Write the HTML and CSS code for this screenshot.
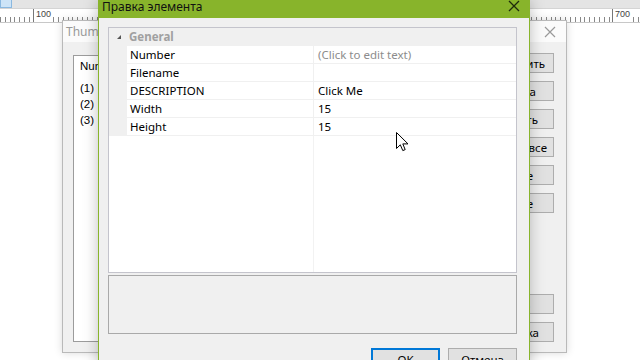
FILE: index.html
```html
<!DOCTYPE html>
<html lang="ru">
<head>
    <meta charset="UTF-8">
    <title>Правка элемента</title>
    <link rel="stylesheet" href="styles.css">
</head>
<body>
<div class="desktop">
    <div class="topbar"><span class="topbar-btn"></span></div>
    <div class="ruler">
        <span class="ruler-mark mark-100">100</span>
        <span class="ruler-mark mark-700">700</span>
    </div>

    <!-- окно на заднем плане -->
    <div class="back-window">
        <div class="bw-title">
            <span>Thumbnail</span>
            <svg class="bw-close" width="12" height="12" viewBox="0 0 12 12"><path d="M1 1L11 11M11 1L1 11" stroke="#9a9a9a" stroke-width="1.2"/></svg>
        </div>
        <div class="bw-body">
            <div class="listbox">
                <div class="lb-head">Number</div>
                <div class="lb-item">(1)</div>
                <div class="lb-item">(2)</div>
                <div class="lb-item">(3)</div>
            </div>
            <div class="bw-buttons">
                <button class="btn pad-8">Добавить</button>
                <button class="btn pad-17">Адреса</button>
                <button class="btn pad-15">Удалить</button>
                <button class="btn pad-6">Удалить все</button>
                <button class="btn pad-20">Выше</button>
                <button class="btn pad-20">Ниже</button>
                <button class="btn btn-low pad-30">Сохранить</button>
                <button class="btn pad-14">Справка</button>
            </div>
        </div>
    </div>

    <!-- активный диалог -->
    <div class="dialog">
        <div class="dlg-title">
            <span>Правка элемента</span>
            <svg class="dlg-close" width="12" height="12" viewBox="0 0 12 12"><path d="M1 1L11 11M11 1L1 11" stroke="#1e2a0c" stroke-width="1.3"/></svg>
        </div>
        <div class="dlg-body">
            <div class="propgrid">
                <div class="pg-category">
                    <span class="pg-arrow"></span>
                    <span class="pg-cat-name">General</span>
                </div>
                <div class="pg-row">
                    <span class="pg-margin"></span>
                    <span class="pg-name">Number</span>
                    <span class="pg-value muted">(Click to edit text)</span>
                </div>
                <div class="pg-row">
                    <span class="pg-margin"></span>
                    <span class="pg-name">Filename</span>
                    <span class="pg-value"></span>
                </div>
                <div class="pg-row">
                    <span class="pg-margin"></span>
                    <span class="pg-name">DESCRIPTION</span>
                    <span class="pg-value">Click Me</span>
                </div>
                <div class="pg-row">
                    <span class="pg-margin"></span>
                    <span class="pg-name">Width</span>
                    <span class="pg-value">15</span>
                </div>
                <div class="pg-row">
                    <span class="pg-margin"></span>
                    <span class="pg-name">Height</span>
                    <span class="pg-value">15</span>
                </div>
                <div class="pg-empty">
                    <span></span>
                    <span class="pg-empty-value"></span>
                </div>
            </div>
            <div class="pg-desc"></div>
            <div class="dlg-buttons">
                <button class="btn btn-default">OK</button>
                <button class="btn">Отмена</button>
            </div>
        </div>
    </div>

    <svg class="cursor" width="13" height="20" viewBox="0 0 13 20">
        <path d="M0.5 0.5V16.5L4.3 12.8L6.8 18.6L9.2 17.6L6.8 11.9H12L0.5 0.5Z" fill="#fff" stroke="#000" stroke-width="1"/>
    </svg>
</div>
</body>
</html>
```

FILE: styles.css
```css
body {
    margin: 0;
    font-family: "Noto Sans", "DejaVu Sans", sans-serif;
    font-size: 11.5px;
    color: #000;
}

.desktop {
    position: relative;
    width: 640px;
    height: 360px;
    overflow: hidden;
    background: #fff;
}

.topbar {
    height: 8px;
    background: #e4e4e4;
    border-bottom: 1px solid #d4d4d4;
}

.topbar-btn {
    display: block;
    width: 10px;
    height: 7px;
    background: #cde4f7;
    border: 1px solid #8ab8e0;
    border-top: none;
}

.ruler {
    position: relative;
    height: 13px;
    background:
        repeating-linear-gradient(to right, #888 0 1px, transparent 1px 4.83px) 0 8px / 100% 5px no-repeat,
        #fff;
    border-bottom: 1px solid #c8c8c8;
}

.ruler-mark {
    position: absolute;
    top: 0;
    padding-left: 2px;
    border-left: 1px solid #777;
    height: 13px;
    font-family: "Liberation Sans", sans-serif;
    font-size: 9px;
    line-height: 10px;
    color: #444;
    background: #fff;
}

.mark-100 { left: 33px; }
.mark-700 { left: 612px; }

/* фоновое окно */
.back-window {
    position: absolute;
    left: 62px;
    top: 20px;
    width: 503px;
    height: 331px;
    border: 1px solid #b9b9b9;
    background: #f0f0f0;
    display: flex;
    flex-direction: column;
    box-shadow: 0 0 8px rgba(0,0,0,0.15);
}

.bw-title {
    height: 21px;
    background: #fbfbfb;
    display: flex;
    align-items: center;
    justify-content: space-between;
    padding: 0 10px 0 3px;
    font-size: 12px;
    color: #999;
}

.bw-body {
    flex: 1;
    display: flex;
    padding: 11px 12px 10px 10px;
    gap: 10px;
}

.listbox {
    flex: 1;
    background: #fff;
    border: 1px solid #9c9c9c;
    margin-top: 2px;
    padding: 4px 6px;
    font-family: "Liberation Sans", sans-serif;
    font-size: 11.5px;
}

.lb-head {
    height: 16px;
    margin-bottom: 6px;
}

.lb-item {
    height: 16px;
}

.bw-buttons {
    width: 84px;
    display: flex;
    flex-direction: column;
    gap: 8px;
}

.btn {
    height: 20px;
    border: 1px solid #adadad;
    background: #e1e1e1;
    font-family: "Noto Sans", sans-serif;
    font-size: 11.5px;
    color: #000;
    padding: 0;
    white-space: nowrap;
    overflow: hidden;
}

.bw-buttons .btn {
    text-align: right;
}

.pad-6 { padding-right: 6px; }
.pad-8 { padding-right: 8px; }
.pad-14 { padding-right: 14px; }
.pad-15 { padding-right: 15px; }
.pad-17 { padding-right: 17px; }
.pad-20 { padding-right: 20px; }
.pad-30 { padding-right: 30px; }

.btn-low {
    margin-top: auto;
}

/* диалог */
.dialog {
    position: absolute;
    left: 98px;
    top: 0;
    width: 430px;
    height: 380px;
    border: 1px solid #88b42b;
    border-top: none;
    background: #f0f0f0;
    box-shadow: 0 0 14px rgba(0,0,0,0.25);
}

.dlg-title {
    height: 18px;
    background: #88b42b;
    display: flex;
    justify-content: space-between;
    padding: 0 9px 0 3px;
    font-size: 12px;
    line-height: 14px;
    color: #111;
}

.dlg-body {
    padding: 9px 12px 0 9px;
}

.propgrid {
    height: 244px;
    border: 1px solid #c4c4cc;
    background: #fff;
    display: flex;
    flex-direction: column;
}

.pg-category {
    height: 17px;
    background: #f0f0f0;
    border-bottom: 1px solid #f0f0f0;
    display: flex;
    align-items: center;
    font-weight: bold;
    color: #a0a0a0;
}

.pg-arrow {
    width: 0;
    height: 0;
    margin: 0 7px 0 8px;
    border-left: 4px solid transparent;
    border-bottom: 4px solid #555;
}

.pg-cat-name {
    padding-left: 1px;
}

.pg-row {
    display: grid;
    grid-template-columns: 18px 186px 1fr;
    height: 18px;
    line-height: 17px;
}

.pg-margin {
    background: #f0f0f0;
}

.pg-name {
    padding-left: 3px;
    border-bottom: 1px solid #f0f0f0;
}

.pg-value {
    padding-left: 4px;
    border-left: 1px solid #f0f0f0;
    border-bottom: 1px solid #f0f0f0;
}

.muted {
    color: #8c8c8c;
}

.pg-empty {
    flex: 1;
    display: grid;
    grid-template-columns: 204px 1fr;
}

.pg-empty-value {
    border-left: 1px solid #f2f2f2;
}

.pg-desc {
    height: 57px;
    margin-top: 2px;
    border: 1px solid #a9a9a9;
    background: #f0f0f0;
}

.dlg-buttons {
    display: flex;
    justify-content: flex-end;
    gap: 8px;
    margin-top: 14px;
}

.dlg-buttons .btn {
    width: 69px;
    height: 23px;
}

.btn-default {
    border: 1px solid #0078d7;
    box-shadow: inset 0 0 0 1px #0078d7;
}

.cursor {
    position: absolute;
    left: 396px;
    top: 132px;
}
```
